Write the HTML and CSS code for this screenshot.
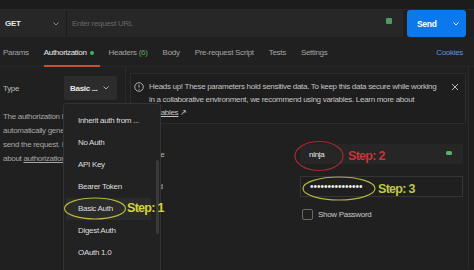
FILE: index.html
```html
<!DOCTYPE html>
<html>
<head>
<meta charset="utf-8">
<link rel="stylesheet" href="styles.css">
</head>
<body>
<div class="app">
  <div class="topbar"></div>
  <div class="urlrow">
    <div class="method"><span class="method-name">GET</span><svg class="chev" width="6" height="4" viewBox="0 0 6 4"><path d="M0.5 0.5 L3 3 L5.5 0.5" fill="none" stroke="#9a9a9a" stroke-width="0.9"/></svg></div>
    <div class="url"><span class="placeholder">Enter request URL</span><span class="envdot"></span></div>
    <div class="send"><span>Send</span><svg class="chev" width="6" height="4" viewBox="0 0 6 4"><path d="M0.5 0.5 L3 3 L5.5 0.5" fill="none" stroke="#ffffff" stroke-width="0.9"/></svg></div>
  </div>
  <div class="tabs">
    <span class="tab">Params</span>
    <span class="tab active">Authorization<i class="gdot"></i></span>
    <span class="tab">Headers <b class="count">(6)</b></span>
    <span class="tab">Body</span>
    <span class="tab">Pre-request Script</span>
    <span class="tab">Tests</span>
    <span class="tab">Settings</span>
    <span class="tab cookies">Cookies</span>
  </div>
  <div class="main">
    <div class="left">
      <div class="typerow">
        <span class="type-label">Type</span>
        <div class="select"><span>Basic ...</span><svg class="chev" width="6" height="4" viewBox="0 0 6 4"><path d="M0.5 0.5 L3 3 L5.5 0.5" fill="none" stroke="#bbbbbb" stroke-width="0.9"/></svg></div>
      </div>
      <p class="desc">The authorization header will be<br>automatically generated when you<br>send the request. Learn more<br>about <u>authorization</u> ↗</p>
    </div>
    <div class="right">
      <div class="alert">
        <svg class="info" width="10" height="10" viewBox="0 0 10 10"><circle cx="5" cy="5" r="4.3" fill="none" stroke="#bdbdbd" stroke-width="0.9"/><path d="M5 2.6 V5.6" stroke="#bdbdbd" stroke-width="0.9"/><circle cx="5" cy="7.2" r="0.55" fill="#bdbdbd"/></svg>
        <p class="alert-text">Heads up! These parameters hold sensitive data. To keep this data secure while working<br>in a collaborative environment, we recommend using variables. Learn more about<br><u>variables</u> ↗</p>
        <svg class="close" width="8" height="8" viewBox="0 0 8 8"><path d="M1 1 L7 7 M7 1 L1 7" stroke="#c8c8c8" stroke-width="0.9"/></svg>
      </div>
      <div class="fields">
        <span class="flabel">Username</span>
        <div class="input filled"><span>ninja</span><span class="vardot"></span></div>
        <span class="flabel">Password</span>
        <div class="input outlined"><span class="dots">•••••••••••••••</span></div>
        <span></span>
        <label class="check"><span class="box"></span><span>Show Password</span></label>
      </div>
    </div>
    <div class="edge"></div>
  </div>

  <ul class="menu">
    <li>Inherit auth from ...</li>
    <li>No Auth</li>
    <li>API Key</li>
    <li>Bearer Token</li>
    <li class="hover">Basic Auth</li>
    <li>Digest Auth</li>
    <li>OAuth 1.0</li>
  </ul>
  <div class="scroll"></div>

  <svg class="marks" width="474" height="270" viewBox="0 0 474 270">
    <ellipse cx="95" cy="208.5" rx="30.5" ry="10.5" fill="none" stroke="#b9b63c" stroke-width="1.2"/>
    <ellipse cx="319" cy="156" rx="24" ry="14.5" fill="none" stroke="#a5282e" stroke-width="1.2"/>
    <ellipse cx="339" cy="188.5" rx="36" ry="11.5" fill="none" stroke="#b2b23e" stroke-width="1.2"/>
  </svg>
  <span class="step step1">Step: 1</span>
  <span class="step step2">Step: 2</span>
  <span class="step step3">Step: 3</span>
</div>
</body>
</html>
```
FILE: styles.css
```css
* { box-sizing: border-box; }
html, body { margin: 0; padding: 0; }
body { background: #202020; }
.app {
  position: relative;
  width: 474px;
  height: 270px;
  overflow: hidden;
  background: #202020;
  font-family: "Liberation Sans", Arial, sans-serif;
  font-size: 8px;
  letter-spacing: -0.3px;
  color: #a8a8a8;
}
.topbar {
  height: 10px;
  background: #1c1c1c;
  border-bottom: 1px solid #2a2a2a;
}
.urlrow {
  display: flex;
  height: 27px;
  padding: 0 8px 0 0;
  background: #1f1f1f;
}
.method {
  width: 67px;
  background: #272727;
  display: flex;
  align-items: center;
  justify-content: space-between;
  padding: 0 7px 0 5px;
  border-right: 1px solid #1b1b1b;
}
.method-name { color: #e6e6e6; font-weight: bold; font-size: 8px; }
.url {
  flex: 1;
  background: #272727;
  display: flex;
  align-items: center;
  justify-content: space-between;
  padding: 0 11px 0 5px;
  margin-right: 4px;
}
.placeholder { color: #686868; }
.envdot {
  width: 6px; height: 6px;
  background: #4f9a5d;
  border-radius: 1px;
  margin-top: -6px;
}
.send {
  width: 59px;
  background: #0b78ec;
  border-radius: 3px;
  display: flex;
  align-items: center;
  justify-content: space-between;
  padding: 0 7px 0 10px;
  color: #ffffff;
  font-weight: bold;
  font-size: 8.5px;
}
.tabs {
  display: flex;
  align-items: center;
  height: 30px;
  padding: 0 11px 0 3px;
  gap: 15px;
  border-bottom: 1px solid #272727;
}
.tab { color: #a2a2a2; position: relative; height: 30px; line-height: 32px; display: flex; align-items: center; padding-top: 2px; }
.tab.active { color: #ececec; }
.tab.active::after {
  content: "";
  position: absolute;
  left: 0; right: -6px; bottom: 0;
  height: 1.5px;
  background: #c8532a;
}
.gdot {
  display: inline-block;
  width: 4px; height: 4px;
  border-radius: 50%;
  background: #3fb35a;
  margin-left: 3px;
}
.count { color: #5aa95f; font-weight: normal; margin-left: 2px; }
.cookies { margin-left: auto; color: #5a97dc; }
.main {
  display: flex;
  height: 202px;
}
.left {
  width: 126px;
  border-right: 1px solid #2a2a2a;
  padding: 9px 0 0 3px;
  overflow: hidden;
}
.typerow {
  display: flex;
  align-items: center;
  justify-content: space-between;
  padding-right: 8px;
}
.type-label { color: #b8b8b8; }
.select {
  width: 53px;
  height: 24px;
  background: #2c2c2c;
  border-radius: 2px;
  display: flex;
  align-items: center;
  justify-content: space-between;
  padding: 0 8px 0 6px;
  color: #e8e8e8;
  font-weight: bold;
}
.desc {
  margin: 10px 0 0;
  line-height: 14px;
  white-space: nowrap;
  color: #a6a6a6;
}
.right {
  flex: 1;
  padding: 6px 2px 0 4px;
}
.alert {
  display: flex;
  align-items: flex-start;
  border: 1px solid #2c2c2c;
  background: #1e1e1e;
  height: 51px;
  padding: 6px 6px 0 3px;
  gap: 5px;
}
.info { margin-top: 2px; flex: none; }
.alert-text {
  margin: 0;
  flex: 1;
  line-height: 13px;
  color: #c4c4c4;
  white-space: nowrap;
}
.close { margin-top: 3px; flex: none; }
.fields {
  display: grid;
  grid-template-columns: 170px 163px;
  row-gap: 12px;
  margin-top: 20px;
  align-items: center;
}
.flabel { color: #b8b8b8; }
.input {
  height: 20px;
  display: flex;
  align-items: center;
  justify-content: space-between;
  padding: 0 11px 0 9px;
  color: #e8e8e8;
}
.input.filled { background: #262626; }
.input.outlined { height: 21px; border: 1px solid #353535; background: #1f1f1f; }
.vardot {
  width: 6px; height: 4px;
  border-radius: 1.5px;
  background: #5cb060;
  margin-top: -2px;
}
.dots { font-size: 10px; letter-spacing: 0; color: #f0f0f0; }
.check {
  display: flex;
  align-items: center;
  gap: 5px;
  padding-left: 2px;
  color: #c8c8c8;
}
.box {
  width: 11px; height: 11px;
  border: 1px solid #6a6a6a;
  border-radius: 2px;
}
.edge {
  width: 6px;
  border-left: 1px solid #2c2c2c;
  background: #1d1d1d;
}
.menu {
  position: absolute;
  left: 63px;
  top: 103px;
  width: 98px;
  height: 175px;
  margin: 0;
  padding: 6px 9px 0 2px;
  list-style: none;
  background: #222222;
  border: 1px solid #333333;
  border-radius: 3px;
}
.menu li {
  height: 22px;
  line-height: 22px;
  padding-left: 12px;
  color: #dedede;
}
.menu li.hover { background: #2b2b2b; }
.scroll {
  position: absolute;
  left: 156px;
  top: 160px;
  width: 3px;
  height: 74px;
  border-radius: 2px;
  background: #3a3a3a;
}
.marks { position: absolute; left: 0; top: 0; pointer-events: none; }
.step {
  position: absolute;
  font-family: "Liberation Sans", Arial, sans-serif;
  font-weight: bold;
  font-size: 12.5px;
  letter-spacing: -0.7px;
  line-height: 14px;
}
.step1 { left: 127px; top: 201px; color: #d6d23c; }
.step2 { left: 348px; top: 149px; color: #c9323a; }
.step3 { left: 378px; top: 182px; color: #bfc843; }
```
